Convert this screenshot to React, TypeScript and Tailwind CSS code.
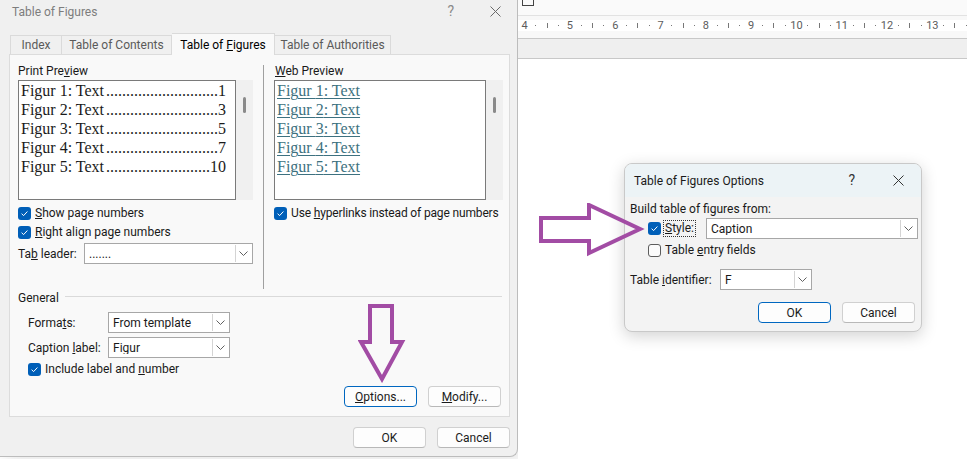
import React from "react";

const ui = "font-['Segoe_UI',Roboto,'Noto_Sans',sans-serif]";
const serif = "font-['Liberation_Serif','Times_New_Roman',serif]";

const Check = ({ checked = true }: { checked?: boolean }) =>
  checked ? (
    <span className="flex h-[13px] w-[13px] shrink-0 items-center justify-center rounded-[3px] bg-[#005fb8]">
      <svg width="9" height="9" viewBox="0 0 9 9">
        <path d="M1.6 4.7 L3.6 6.6 L7.4 2.5" fill="none" stroke="white" strokeWidth="1" />
      </svg>
    </span>
  ) : (
    <span className="h-[13px] w-[13px] shrink-0 rounded-[3px] border border-[#5c5c5c] bg-[#fbfbfb]" />
  );

const Chevron = () => (
  <svg width="9" height="5" viewBox="0 0 9 5">
    <path d="M0.5 0.5 L4.5 4.5 L8.5 0.5" fill="none" stroke="#606060" strokeWidth="1" />
  </svg>
);

const Select = ({ value, className }: { value: string; className: string }) => (
  <div className={`flex h-[21px] items-center border border-[#a7a7a7] bg-white ${className}`}>
    <span className="flex-1 truncate pl-[4px] text-[12px] leading-none">{value}</span>
    <span className="mr-px flex h-[17px] w-[16px] items-center justify-center border-l border-[#d4d4d4] bg-white">
      <Chevron />
    </span>
  </div>
);

const Btn = ({ children, primary }: { children: React.ReactNode; primary?: boolean }) => (
  <button
    className={`flex h-[21px] w-[73px] items-center justify-center rounded-[4px] border bg-[#fdfdfd] text-[12px] leading-none text-[#1b1b1b] ${
      primary ? "border-[#0067c0]" : "border-[#d0d0d0] border-b-[#b8b8b8]"
    }`}
  >
    {children}
  </button>
);

const CheckRow = ({ children, checked = true, className = "" }: { children: React.ReactNode; checked?: boolean; className?: string }) => (
  <div className={`flex items-center gap-[4px] text-[12px] ${className}`}>
    <Check checked={checked} />
    <span>{children}</span>
  </div>
);

const entries = [
  { n: 1, p: "1", dots: 28 },
  { n: 2, p: "3", dots: 28 },
  { n: 3, p: "5", dots: 28 },
  { n: 4, p: "7", dots: 28 },
  { n: 5, p: "10", dots: 26 },
];

const Scrollbar = () => (
  <div className="flex h-[120px] w-[17px] justify-center bg-[#f0f0f0] pt-[17px]">
    <div className="h-[16px] w-[3px] rounded-full bg-[#8a8a8a]" />
  </div>
);

const MainDialog = () => (
  <div className="flex h-[457px] w-[518px] shrink-0 flex-col rounded-br-[8px] border-r border-b border-[#bcbcbc] bg-[#f0f0f0] shadow-[6px_4px_16px_rgba(0,0,0,0.10)]">
    {/* title */}
    <div className="flex h-[22px] items-center pl-[12px] pr-[16px] pt-[1px]">
      <span className="flex-1 text-[12px] text-[#7d7d7d]">Table of Figures</span>
      <span className="mr-[36px] text-[14px] text-[#8a8a8a]">?</span>
      <svg width="11" height="11" viewBox="0 0 11 11">
        <path d="M0.5 0.5 L10.5 10.5 M10.5 0.5 L0.5 10.5" stroke="#6a6a6a" strokeWidth="1" />
      </svg>
    </div>

    {/* tabs */}
    <div className="mt-[11px] flex h-[21px] items-end pl-[10px] text-[12px]">
      <div className="flex h-[19px] w-[52px] items-center justify-center border border-b-0 border-[#dadada] text-[#5a5a5a]">Index</div>
      <div className="flex h-[19px] w-[110px] items-center justify-center border border-b-0 border-l-0 border-[#dadada] text-[#5a5a5a]">Table of Contents</div>
      <div className="relative z-10 -mb-px flex h-[22px] w-[103px] items-center justify-center border border-b-0 border-l-0 border-[#dadada] bg-[#f9f9f9] text-black">
        Table of <u className="ml-[3px]">F</u>igures
      </div>
      <div className="flex h-[19px] w-[116px] items-center justify-center border border-b-0 border-l-0 border-[#dadada] text-[#5a5a5a]">Table of Authorities</div>
    </div>

    {/* panel */}
    <div className="ml-[9px] flex h-[363px] w-[501px] flex-col border border-[#dcdcdc] bg-[#f9f9f9] pl-[8px] pt-[8px] text-[#1a1a1a]">
      <div className="flex">
        {/* left column */}
        <div className="flex w-[235px] flex-col">
          <div className="h-[17px] text-[12px] leading-[17px]">
            Print Pre<u>v</u>iew
          </div>
          <div className="flex">
            <div className={`h-[120px] w-[218px] border border-[#7a7a7a] bg-white pl-[2px] pr-[9px] text-[16px] ${serif}`}>
              {entries.map((e) => (
                <div key={e.n} className="flex h-[19px] items-center justify-between whitespace-nowrap leading-[19px]">
                  <span>Figur {e.n}: Text</span>
                  <span>
                    {".".repeat(e.dots)}
                    {e.p}
                  </span>
                </div>
              ))}
            </div>
            <Scrollbar />
          </div>
          <CheckRow className="mt-[4px] h-[18px]">
            <u>S</u>how page numbers
          </CheckRow>
          <CheckRow className="mt-px h-[18px]">
            <u>R</u>ight align page numbers
          </CheckRow>
          <div className="mt-[2px] flex items-center text-[12px]">
            <span className="w-[66px]">
              Ta<u>b</u> leader:
            </span>
            <Select value="......." className="w-[169px]" />
          </div>
        </div>

        <div className="ml-[10px] mt-[2px] h-[224px] w-px bg-[#a0a0a0]" />

        {/* right column */}
        <div className="ml-[10px] flex w-[229px] flex-col">
          <div className="h-[17px] pl-px text-[12px] leading-[17px]">
            <u>W</u>eb Preview
          </div>
          <div className="flex">
            <div className={`h-[120px] w-[212px] border border-[#7a7a7a] bg-white pl-[2px] text-[16px] text-[#3d7180] ${serif}`}>
              {entries.map((e) => (
                <div key={e.n} className="h-[19px] leading-[19px]">
                  <span className="underline decoration-1 underline-offset-2">Figur {e.n}: Text</span>
                </div>
              ))}
            </div>
            <Scrollbar />
          </div>
          <CheckRow className="mt-[4px] h-[18px] whitespace-nowrap tracking-[-0.15px]">
            Use <u>h</u>yperlinks instead of page numbers
          </CheckRow>
        </div>
      </div>

      {/* general */}
      <div className="mt-[1px] flex h-[16px] items-center pr-[7px] text-[12px]">
        <span>General</span>
        <div className="ml-[6px] mb-[3px] h-px flex-1 bg-[#dadada]" />
      </div>
      <div className="mt-[6px] flex items-center pl-[10px] text-[12px]">
        <span className="w-[80px]">
          Forma<u>t</u>s:
        </span>
        <Select value="From template" className="w-[122px]" />
      </div>
      <div className="mt-[4px] flex items-center pl-[10px] text-[12px]">
        <span className="w-[80px]">
          Caption <u>l</u>abel:
        </span>
        <Select value="Figur" className="w-[122px]" />
      </div>
      <CheckRow className="mt-[3px] h-[16px] pl-[10px]">
        Include label and <u>n</u>umber
      </CheckRow>
      <div className="mt-[9px] flex justify-end gap-[11px] pr-[8px]">
        <Btn primary>
          <u>O</u>ptions...
        </Btn>
        <Btn>
          <u>M</u>odify...
        </Btn>
      </div>
    </div>

    <div className="mt-[10px] flex justify-end gap-[11px] pr-[7px]">
      <Btn>OK</Btn>
      <Btn>Cancel</Btn>
    </div>
  </div>
);

const rulerNums = [4, 5, 6, 7, 8, 9, 10, 11, 12, 13];

const WordArea = () => (
  <div className="flex min-w-0 flex-1 flex-col">
    <div className="h-[15px] bg-[#fafafa] pl-[4px]">
      <div className="-mt-px h-[7px] w-[12px] border border-[#444]" />
    </div>
    <div className="h-[1px] bg-[#e2e2e2]" />
    <div className="flex h-[22px] flex-col justify-start bg-[#f8f8f8] pt-[4px]">
      <div className="flex h-[11px] overflow-hidden bg-white pl-[1px] text-[11px] leading-none text-[#5c5c5c]">
        {rulerNums.map((n) => (
          <div key={n} className="grid w-[45.3px] shrink-0 grid-cols-4 items-center justify-items-center">
            <span>{n}</span>
            <span className="h-[1px] w-[1px] bg-[#777]" />
            <span className="h-[5px] w-[1px] bg-[#777]" />
            <span className="h-[1px] w-[1px] bg-[#777]" />
          </div>
        ))}
      </div>
    </div>
    <div className="h-[21px] border-y border-[#c8c8c8] bg-[#efefef]" />
    <div className="flex-1 bg-white" />
  </div>
);

const OptionsDialog = () => (
  <div className={`absolute left-[624px] top-[163px] flex h-[169px] w-[298px] flex-col overflow-hidden rounded-[8px] border border-[#c9c9c9] bg-[#f3f3f3] text-[#1a1a1a] shadow-[0_4px_16px_rgba(0,0,0,0.18)] ${ui}`}>
    <div className="flex h-[33px] shrink-0 items-center bg-[#ecf3f6] pl-[9px] pr-[17px]">
      <span className="flex-1 text-[12px]">Table of Figures Options</span>
      <span className="mr-[38px] text-[14px] text-[#333]">?</span>
      <svg width="11" height="11" viewBox="0 0 11 11">
        <path d="M0.5 0.5 L10.5 10.5 M10.5 0.5 L0.5 10.5" stroke="#333" strokeWidth="1" />
      </svg>
    </div>
    <div className="flex flex-col pl-[5px] text-[12px]">
      <div className="mt-[4px] h-[16px] leading-[16px]">Build table of figures from:</div>
      <div className="mt-[1px] flex items-center pl-[18px]">
        <Check />
        <span className="ml-[2px] border border-dotted border-[#333] px-px leading-[15px]">
          <u>S</u>tyle:
        </span>
        <Select value="Caption" className="ml-[10px] w-[212px]" />
      </div>
      <CheckRow checked={false} className="mt-[3px] h-[16px] pl-[18px]">
        Table <u>e</u>ntry fields
      </CheckRow>
      <div className="mt-[11px] flex items-center">
        <span className="w-[90px]">
          Table <u>i</u>dentifier:
        </span>
        <Select value="F" className="w-[92px]" />
      </div>
      <div className="mt-[12px] flex justify-end gap-[11px] pr-[6px]">
        <Btn primary>OK</Btn>
        <Btn>Cancel</Btn>
      </div>
    </div>
  </div>
);

export default function App() {
  return (
    <div className={`relative flex h-[459px] w-[967px] overflow-hidden bg-white text-[#1a1a1a] ${ui}`}>
      <MainDialog />
      <WordArea />
      <OptionsDialog />

      {/* annotation arrows */}
      <svg className="pointer-events-none absolute left-[539px] top-[203px]" width="106" height="54" viewBox="0 0 106 54">
        <polygon points="2,15 50,15 50,2 101,26 50,50 50,38 2,38" fill="none" stroke="#a24ca4" strokeWidth="4" strokeLinejoin="miter" />
      </svg>
      <svg className="pointer-events-none absolute left-[358px] top-[303px]" width="48" height="80" viewBox="0 0 48 80">
        <polygon points="12,3 34,3 34,39 44,39 24,76 3,39 12,39" fill="none" stroke="#a24ca4" strokeWidth="4" strokeLinejoin="miter" />
      </svg>
    </div>
  );
}
